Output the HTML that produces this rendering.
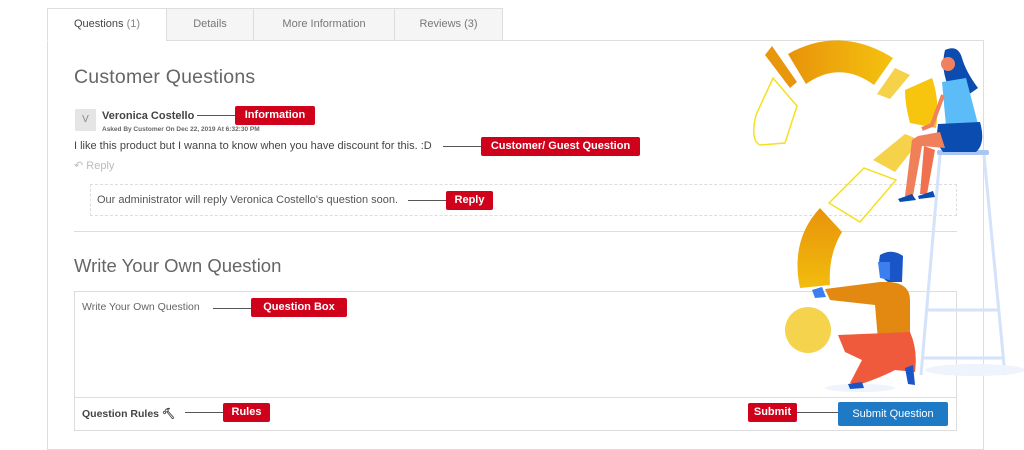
<!DOCTYPE html>
<html><head><meta charset="utf-8"><style>
*{margin:0;padding:0;box-sizing:border-box}
body{width:1024px;height:438px;background:#fff;font-family:"Liberation Sans",sans-serif;position:relative;overflow:hidden;color:#333}
.a{position:absolute}
.tab{position:absolute;top:8px;height:33px;border:1px solid #ddd;background:#f5f5f5;font-size:11px;color:#777;text-align:center;line-height:31px}
.lbl{position:absolute;background:#d0021b;color:#fff;font-size:11px;font-weight:bold;text-align:center;border-radius:2px;line-height:19px;height:19px}
.ln{position:absolute;height:1px;background:#555}
</style></head><body>
<div class="a" style="left:47px;top:40px;width:937px;height:410px;border:1px solid #ddd"></div>
<div class="tab" style="left:47px;width:120px;background:#fff;border-bottom-color:#fff;color:#444">Questions <span style="color:#888">(1)</span></div>
<div class="tab" style="left:166px;width:88px">Details</div>
<div class="tab" style="left:253px;width:142px">More Information</div>
<div class="tab" style="left:394px;width:109px">Reviews (3)</div>

<div class="a" style="left:74px;top:66px;font-size:19.5px;color:#666;letter-spacing:0.2px">Customer Questions</div>
<div class="a" style="left:75px;top:109px;width:21px;height:22px;background:#e5e5e5;color:#888;font-size:10px;text-align:center;line-height:22px">V</div>
<div class="a" style="left:102px;top:110px;font-size:11px;font-weight:bold;color:#444">Veronica Costello</div>
<div class="a" style="left:102px;top:126px;font-size:6.5px;color:#666;font-weight:bold">Asked By Customer On Dec 22, 2019 At 6:32:30 PM</div>
<div class="ln" style="left:197px;top:115px;width:38px"></div>
<div class="lbl" style="left:235px;top:106px;width:80px">Information</div>
<div class="a" style="left:74px;top:140px;font-size:11px;color:#444">I like this product but I wanna to know when you have discount for this. :D</div>
<div class="ln" style="left:443px;top:146px;width:38px"></div>
<div class="lbl" style="left:481px;top:137px;width:159px">Customer/ Guest Question</div>
<div class="a" style="left:74px;top:159px;font-size:11px;color:#bbb">&#8630; Reply</div>
<div class="a" style="left:90px;top:184px;width:867px;height:32px;border:1px dashed #ddd"></div>
<div class="a" style="left:97px;top:194px;font-size:11px;color:#555">Our administrator will reply Veronica Costello's question soon.</div>
<div class="ln" style="left:408px;top:200px;width:38px"></div>
<div class="lbl" style="left:446px;top:191px;width:47px">Reply</div>
<div class="a" style="left:74px;top:231px;width:883px;height:1px;background:#ddd"></div>
<div class="a" style="left:74px;top:255px;font-size:18.5px;color:#666">Write Your Own Question</div>
<div class="a" style="left:74px;top:291px;width:883px;height:140px;border:1px solid #ddd"></div>
<div class="a" style="left:75px;top:397px;width:881px;height:1px;background:#ddd"></div>
<div class="a" style="left:82px;top:301px;font-size:10.5px;color:#666">Write Your Own Question</div>
<div class="ln" style="left:213px;top:308px;width:38px"></div>
<div class="lbl" style="left:251px;top:298px;width:96px">Question Box</div>
<div class="a" style="left:82px;top:407px;font-size:10.5px;font-weight:bold;color:#444">Question Rules &#x1F528;&#xFE0E;</div>
<div class="ln" style="left:185px;top:412px;width:38px"></div>
<div class="lbl" style="left:223px;top:403px;width:47px">Rules</div>
<div class="lbl" style="left:748px;top:403px;width:49px">Submit</div>
<div class="ln" style="left:797px;top:412px;width:41px"></div>
<div class="a" style="left:838px;top:402px;width:110px;height:24px;background:#1e7ac4;color:#fff;font-size:11px;text-align:center;line-height:24px;border-radius:2px">Submit Question</div>

<svg class="a" style="left:0;top:0" width="1024" height="438">
<defs><linearGradient id="g" x1="0" x2="1"><stop offset="0" stop-color="#e8930a"/><stop offset="1" stop-color="#f5c20f"/></linearGradient>
<linearGradient id="g2" x1="0" y1="0" x2="0" y2="1"><stop offset="0" stop-color="#e8930a"/><stop offset="1" stop-color="#f2bc0d"/></linearGradient></defs>
<polygon points="765,55 772,46 797,82 790,88" fill="#e8960c"/>
<path d="M788,54 Q840,25 893,58 L874,85 Q840,60 806,84 Z" fill="url(#g)"/>
<polygon points="877,94 895,68 910,75 890,99" fill="#f5d24a"/>
<path d="M905,90 L932,78 Q940,100 936,128 L910,123 Q905,105 905,90Z" fill="#f7c40e"/>
<path d="M773,78 L797,106 L785,143 L760,145 Q750,140 756,115Z" fill="none" stroke="#f5e020" stroke-width="1.5"/>
<polygon points="873,160 905,134 920,140 895,172" fill="#f5d24a"/>
<polygon points="829,203 864,168 896,180 860,222" fill="none" stroke="#f5e020" stroke-width="1.5"/>
<path d="M820,208 L842,232 Q828,255 830,285 L800,288 Q790,240 820,208Z" fill="url(#g2)"/>
<circle cx="808" cy="330" r="23" fill="#f6d34c"/>
<g stroke="#d4e2fb" stroke-width="3" fill="none"><line x1="940" y1="155" x2="921" y2="375"/><line x1="984" y1="155" x2="1005" y2="375"/><line x1="927" y1="310" x2="999" y2="310"/><line x1="924" y1="358" x2="1002" y2="358"/></g>
<rect x="937" y="150" width="52" height="5" rx="2" fill="#a9c5f3"/>
<ellipse cx="975" cy="370" rx="50" ry="6" fill="#eef3fc"/>
<path d="M945,50 Q958,44 962,58 Q966,72 978,88 L968,95 L950,90 Q940,70 945,50Z" fill="#0a4cb0"/>
<circle cx="948" cy="64" r="7" fill="#f08060"/>
<path d="M942,82 L966,78 L978,124 L946,126Z" fill="#5bbcf7"/>
<path d="M943,95 L932,125 L922,129" fill="none" stroke="#f08060" stroke-width="4"/>
<path d="M938,124 L980,122 Q986,143 976,152 L943,152 L936,142Z" fill="#0a4cb0"/>
<path d="M940,132 L918,136 L912,140 L905,196 L913,196 L922,146 L945,148Z" fill="#f0805a"/>
<path d="M924,146 L920,194 L927,194 L935,150Z" fill="#f07050"/>
<path d="M898,199 L912,194 L916,200 L900,202Z" fill="#0a4cb0"/><path d="M918,196 L933,191 L935,197 L919,199Z" fill="#0a4cb0"/>
<ellipse cx="860" cy="388" rx="35" ry="4" fill="#eef3fc"/>
<path d="M880,255 Q892,248 903,256 L902,282 L888,282 Q876,275 880,255Z" fill="#1a55c8"/>
<path d="M878,262 L890,262 L890,280 L880,278Z" fill="#3a7ef0"/>
<path d="M825,289 L880,282 Q910,280 910,300 L910,340 L878,340 L875,305 L830,300Z" fill="#e38912"/>
<path d="M812,290 L822,287 L826,297 L815,298Z" fill="#3a7ef0"/>
<path d="M838,335 L910,332 Q918,350 915,372 L895,370 Q880,378 858,385 L850,383 L862,360 L845,352Z" fill="#f05a3c"/>
<path d="M905,368 L913,365 L915,385 L908,384Z" fill="#1a55c8"/><path d="M848,384 L862,382 L864,388 L850,389Z" fill="#1a55c8"/>
</svg>
</body></html>
